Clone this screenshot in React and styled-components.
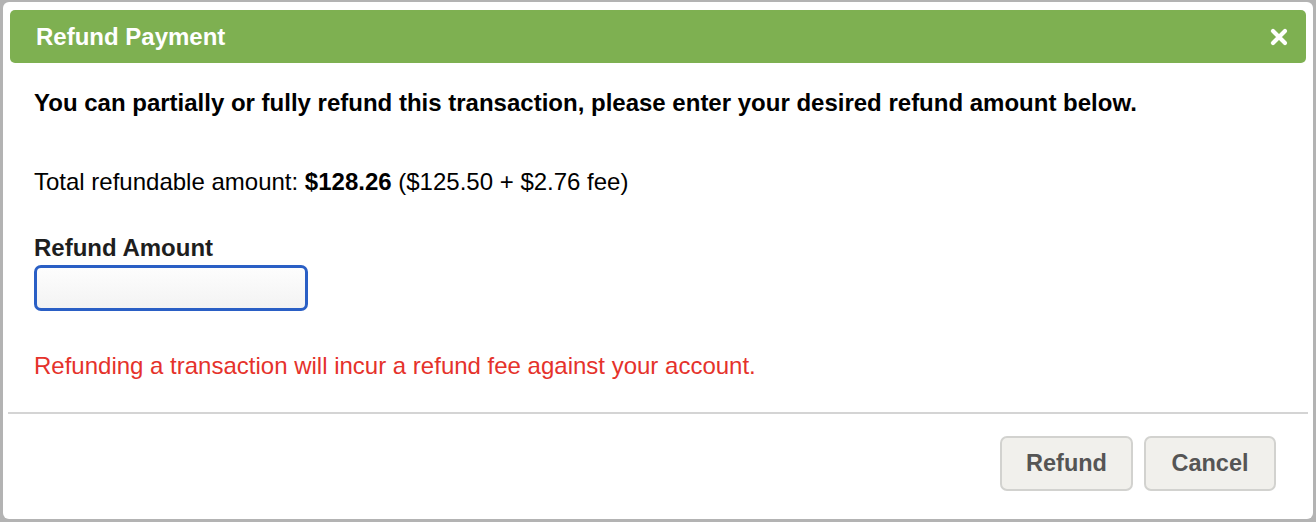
import React from "react";
import styled, { createGlobalStyle } from "styled-components";

const Global = createGlobalStyle`
  html, body { margin: 0; padding: 0; background: #b3b3b3; }
  body { font-family: "Liberation Sans", Arial, Helvetica, sans-serif; }
  #root { padding: 2px 3px 3px 3px; }
`;

const Dialog = styled.div`
  box-sizing: border-box;
  width: 1310px;
  height: 517px;
  background: #ffffff;
  border-radius: 6px;
  padding: 8px 7px 0 7px;
  display: flex;
  flex-direction: column;
`;

const TitleBar = styled.div`
  height: 53px;
  background: #7eb051;
  border-radius: 5px;
  display: flex;
  align-items: center;
  justify-content: space-between;
  padding: 0 17px 0 26px;
  flex-shrink: 0;
`;

const Title = styled.h2`
  margin: 0;
  color: #ffffff;
  font-size: 24px;
  font-weight: bold;
  line-height: 28px;
`;

const CloseBtn = styled.button`
  border: 0;
  background: transparent;
  padding: 0;
  width: 20px;
  height: 20px;
  display: flex;
  align-items: center;
  justify-content: center;
  cursor: pointer;
`;

const Content = styled.div`
  padding: 0 24px;
  display: flex;
  flex-direction: column;
  align-items: flex-start;
`;

const Lead = styled.p`
  margin: 26px 0 0 0;
  font-size: 24px;
  line-height: 28px;
  font-weight: bold;
  color: #000;
  white-space: nowrap;
`;

const Line = styled.p`
  margin: ${(p) => p.$mt}px 0 0 0;
  font-size: 24px;
  line-height: 28px;
  color: ${(p) => p.$color || "#000"};
`;

const Label = styled.label`
  margin-top: 38px;
  font-size: 24px;
  line-height: 28px;
  font-weight: bold;
  color: #1e1e1e;
`;

const Input = styled.input`
  box-sizing: border-box;
  margin-top: 3px;
  width: 274px;
  height: 46px;
  border: 3px solid #2a5fc5;
  border-radius: 7px;
  background: linear-gradient(#fdfdfd, #f3f3f3);
  outline: none;
  font-size: 20px;
  padding: 0 8px;
`;

const Divider = styled.hr`
  margin: 32px -2px 0 -2px;
  border: 0;
  height: 2px;
  background: #d4d4d4;
`;

const Footer = styled.div`
  display: flex;
  justify-content: flex-end;
  gap: 11px;
  padding: 22px 30px 0 0;
`;

const Button = styled.button`
  box-sizing: border-box;
  height: 55px;
  width: ${(p) => p.$w}px;
  background: #f1f0ec;
  border: 2px solid #d2d2cf;
  border-radius: 7px;
  font-family: "Liberation Sans", Arial, Helvetica, sans-serif;
  font-size: 23.5px;
  font-weight: bold;
  color: #555;
  cursor: pointer;
`;

export default function App() {
  return (
    <>
      <Global />
      <Dialog>
        <TitleBar>
          <Title>Refund Payment</Title>
          <CloseBtn aria-label="Close">
            <svg width="20" height="20" viewBox="0 0 20 20">
              <path d="M4 4 L16 16 M16 4 L4 16" stroke="#fff" strokeWidth="4.2" strokeLinecap="round" />
            </svg>
          </CloseBtn>
        </TitleBar>
        <Content>
          <Lead>
            You can partially or fully refund this transaction, please enter your desired refund amount below.
          </Lead>
          <Line $mt={51}>
            Total refundable amount: <b>$128.26</b> ($125.50 + $2.76 fee)
          </Line>
          <Label htmlFor="amt">Refund Amount</Label>
          <Input id="amt" type="text" />
          <Line $mt={41} $color="#e5322b">
            Refunding a transaction will incur a refund fee against your account.
          </Line>
        </Content>
        <Divider />
        <Footer>
          <Button $w={133}>Refund</Button>
          <Button $w={132}>Cancel</Button>
        </Footer>
      </Dialog>
    </>
  );
}
